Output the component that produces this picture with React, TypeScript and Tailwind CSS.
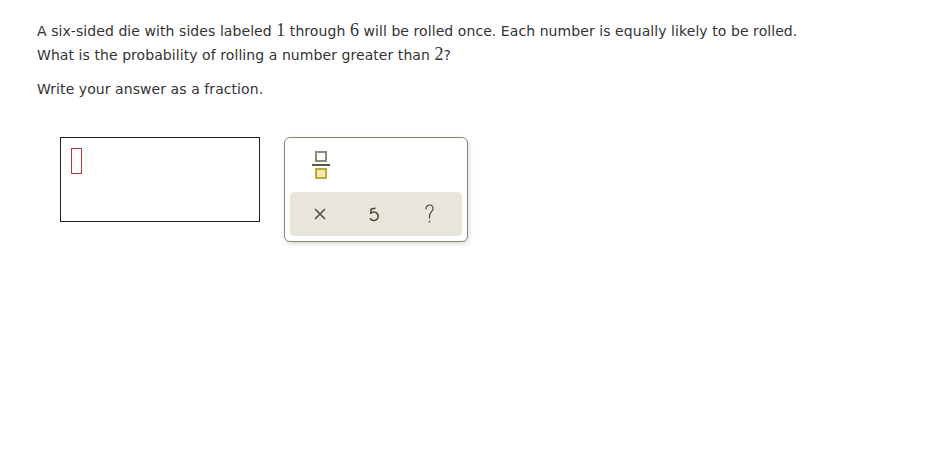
import React from "react";

export default function App() {
  return (
    <div className="w-[927px] h-[459px] bg-white text-[#333333] font-['DejaVu_Sans',Verdana,sans-serif] text-[14px] tracking-[0.07px]">
      <div className="pl-[37px] pt-[19px]">
        <p className="leading-[23px]">
          A six-sided die with sides labeled <span className="font-['Liberation_Serif',serif] text-[18px]">1</span> through{" "}
          <span className="font-['Liberation_Serif',serif] text-[18px]">6</span> will be rolled once. Each number is equally likely to be rolled.
        </p>
        <p className="leading-[23px]">
          What is the probability of rolling a number greater than <span className="font-['Liberation_Serif',serif] text-[18px]">2</span>?
        </p>
        <p className="leading-[23px] mt-[11px]">Write your answer as a fraction.</p>
      </div>
      <div className="flex items-start pl-[60px] mt-[36px] gap-[24px]">
        <div className="w-[200px] h-[85px] border border-[#222222] pl-[10px] pt-[10px]">
          <div className="w-[11px] h-[26px] border border-[#c0343c]" />
        </div>
        <div className="w-[184px] h-[105px] rounded-[6px] border border-[#8c8768] bg-white shadow-[1px_2px_5px_rgba(0,0,0,0.15)] p-[5px] flex flex-col">
          <div className="h-[49px] flex items-start pl-[22px] pt-[8px]">
            <div className="flex flex-col items-center">
              <div className="w-[12px] h-[11px] border-2 border-[#8f8b77] bg-white" />
              <div className="w-[18px] h-[2px] bg-[#5d5839] my-[2px]" />
              <div className="w-[12px] h-[11px] border-2 border-[#c3a73a] bg-[#f6eab0]" />
            </div>
          </div>
          <div className="flex-1 rounded-[4px] bg-[#e8e6dc] flex items-center pl-[24px]">
            <svg width="12" height="12" viewBox="0 0 12 12">
              <path d="M1 1 L11 11 M11 1 L1 11" stroke="#4e4a30" strokeWidth="1.5" fill="none" />
            </svg>
            <svg width="12" height="15" viewBox="0 0 12 15" className="ml-[42px]">
              <path d="M7 1.2 L3.2 2 L2.8 6.3" stroke="#4e4a30" strokeWidth="1.5" fill="none" strokeLinecap="round" strokeLinejoin="round" />
              <path d="M2.8 6.3 A4.3 4.3 0 1 1 2.4 11.8" stroke="#4e4a30" strokeWidth="1.5" fill="none" strokeLinecap="round" />
            </svg>
            <svg width="9" height="20" viewBox="0 0 9 20" className="ml-[45px]">
              <path d="M1 5 C1 2.2 2.8 1 4.5 1 C6.5 1 8 2.4 8 4.6 C8 7.6 4.5 8.4 4.5 12 L4.5 14" stroke="#4e4a30" strokeWidth="1.2" fill="none" strokeLinecap="round" />
              <circle cx="4.5" cy="17.6" r="0.9" fill="#4e4a30" />
            </svg>
          </div>
        </div>
      </div>
    </div>
  );
}
